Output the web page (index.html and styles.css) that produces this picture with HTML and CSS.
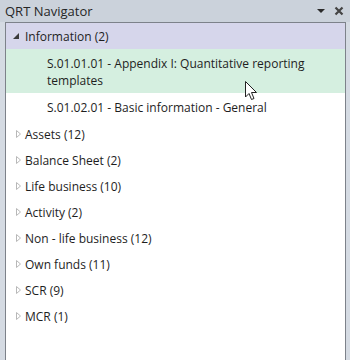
FILE: index.html
```html
<!DOCTYPE html>
<html>
<head>
<meta charset="utf-8">
<link rel="stylesheet" href="styles.css">
</head>
<body>
<div class="titlebar">
  <span class="title">QRT Navigator</span>
  <span class="tools">
    <svg class="ico" width="10" height="10" viewBox="0 0 10 10"><path d="M1 3 L9 3 L5 7 Z" fill="#2b2b2b"/></svg>
    <svg class="ico" width="10" height="10" viewBox="0 0 10 10"><path d="M1.5 1.5 L8.5 8.5 M8.5 1.5 L1.5 8.5" stroke="#444" stroke-width="2.2"/></svg>
  </span>
</div>
<div class="panel">
  <div class="group open">
    <svg class="tri" width="8" height="8" viewBox="0 0 8 8"><path d="M7 1 L7 7 L1 7 Z" fill="#3a3a3a"/></svg>
    <span>Information (2)</span>
  </div>
  <div class="sub selected">S.01.01.01 - Appendix I: Quantitative reporting templates</div>
  <div class="sub single">S.01.02.01 - Basic information - General</div>
  <div class="group"><svg class="tri" width="8" height="8" viewBox="0 0 8 8"><path d="M2.5 0.5 L6.5 4 L2.5 7.5 Z" fill="none" stroke="#b8b8b8"/></svg><span>Assets (12)</span></div>
  <div class="group"><svg class="tri" width="8" height="8" viewBox="0 0 8 8"><path d="M2.5 0.5 L6.5 4 L2.5 7.5 Z" fill="none" stroke="#b8b8b8"/></svg><span>Balance Sheet (2)</span></div>
  <div class="group"><svg class="tri" width="8" height="8" viewBox="0 0 8 8"><path d="M2.5 0.5 L6.5 4 L2.5 7.5 Z" fill="none" stroke="#b8b8b8"/></svg><span>Life business (10)</span></div>
  <div class="group"><svg class="tri" width="8" height="8" viewBox="0 0 8 8"><path d="M2.5 0.5 L6.5 4 L2.5 7.5 Z" fill="none" stroke="#b8b8b8"/></svg><span>Activity (2)</span></div>
  <div class="group"><svg class="tri" width="8" height="8" viewBox="0 0 8 8"><path d="M2.5 0.5 L6.5 4 L2.5 7.5 Z" fill="none" stroke="#b8b8b8"/></svg><span>Non - life business (12)</span></div>
  <div class="group"><svg class="tri" width="8" height="8" viewBox="0 0 8 8"><path d="M2.5 0.5 L6.5 4 L2.5 7.5 Z" fill="none" stroke="#b8b8b8"/></svg><span>Own funds (11)</span></div>
  <div class="group"><svg class="tri" width="8" height="8" viewBox="0 0 8 8"><path d="M2.5 0.5 L6.5 4 L2.5 7.5 Z" fill="none" stroke="#b8b8b8"/></svg><span>SCR (9)</span></div>
  <div class="group"><svg class="tri" width="8" height="8" viewBox="0 0 8 8"><path d="M2.5 0.5 L6.5 4 L2.5 7.5 Z" fill="none" stroke="#b8b8b8"/></svg><span>MCR (1)</span></div>
  <svg class="cursor" width="14" height="21" viewBox="0 0 14 21"><path d="M0.5 0.5 L0.5 16 L4 12.5 L6.5 18.5 L9 17.5 L6.5 11.5 L11.5 11.5 Z" fill="#fff" stroke="#222" stroke-width="1" stroke-linejoin="miter"/></svg>
</div>
</body>
</html>
```

FILE: styles.css
```css
html, body {
  margin: 0;
  padding: 0;
}
body {
  width: 350px;
  height: 360px;
  background: #d5dbe3;
  font-family: "Open Sans", "Noto Sans", sans-serif;
  font-size: 12px;
  color: #1e1e1e;
  overflow: hidden;
}
.titlebar {
  height: 22px;
  display: flex;
  align-items: center;
  justify-content: space-between;
  padding: 0 5px 0 5px;
  background: #cbd2db;
}
.title {
  font-size: 13px;
  color: #262626;
}
.tools {
  display: flex;
  gap: 8px;
  align-items: center;
  padding-right: 1px;
}
.ico {
  display: block;
}
.panel {
  position: relative;
  margin: 0 4px 0 5px;
  height: 338px;
  background: #fff;
  border: 1px solid #7d828a;
  border-bottom: none;
  box-sizing: border-box;
}
.group {
  height: 26px;
  display: flex;
  align-items: center;
  padding-left: 8px;
  gap: 3px;
}
.group.open {
  background: #d6d6eb;
  height: 26px;
  padding-left: 6px;
  gap: 5px;
}
.tri {
  display: block;
}
.sub {
  padding: 6px 10px 4px 41px;
  line-height: 17px;
}
.sub.selected {
  background: #d5efe0;
}
.sub.single {
  padding-top: 6px;
  padding-bottom: 5px;
}
.cursor {
  position: absolute;
  left: 239px;
  top: 58px;
}
```
